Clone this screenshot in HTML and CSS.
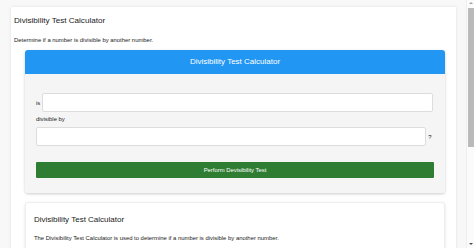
FILE: index.html
```html
<!DOCTYPE html>
<html lang="en">
  <head>
    <meta charset="UTF-8" />
    <meta name="viewport" content="width=device-width, initial-scale=1.0" />
    <title>Divisibility Test Calculator</title>
    <link rel="stylesheet" href="styles.css">
  </head>
  <body>
    <div class="page">
      <h1 class="page-title">Divisibility Test Calculator</h1>
      <p class="intro">Determine if a number is divisible by another number.</p>

      <!-- calculator -->
      <div class="calc">
        <div class="calc-head">Divisibility Test Calculator</div>
        <div class="calc-body">
          <div class="row">
            <label class="label-inline" for="num">is</label>
            <input class="field" id="num" type="text">
          </div>
          <label class="label-block" for="div">divisible by</label>
          <div class="row">
            <input class="field" id="div" type="text">
            <span class="qmark">?</span>
          </div>
          <button class="btn" type="button">Perform Devisibility Test</button>
        </div>
      </div>

      <!-- info -->
      <div class="info">
        <h2 class="info-title">Divisibility Test Calculator</h2>
        <p class="info-text">The Divisibility Test Calculator is used to determine if a number is divisible by another number.</p>
      </div>
    </div>

    <!-- window scrollbar -->
    <div class="scrollbar">
      <span class="arrow arrow-up"></span>
      <span class="thumb"></span>
      <span class="arrow arrow-down"></span>
    </div>
  </body>
</html>
```

FILE: styles.css
```css
* {
  margin: 0;
  padding: 0;
  box-sizing: border-box;
}

html,
body {
  height: 100%;
  overflow: hidden;
}

body {
  background: #f8f8f8;
  font-family: "Liberation Sans", Arial, sans-serif;
  color: #1a1a1a;
}

/* white page container */
.page {
  width: 445px;
  min-height: 260px;
  margin: 7px 0 0 11px;
  padding: 9px 3px 20px;
  background: #fff;
  box-shadow: 0 0 3px rgba(0, 0, 0, 0.1);
}

.page-title {
  font-size: 8.1px;
  line-height: 9px;
  font-weight: normal;
}

.intro {
  margin-top: 12px;
  font-size: 5.9px;
  line-height: 7px;
}

/* calculator card */
.calc {
  margin: 6px 8px 0 11px;
  border-radius: 3px;
  box-shadow: 0 1px 3px rgba(0, 0, 0, 0.2);
}

.calc-head {
  height: 24px;
  line-height: 24px;
  text-align: center;
  font-size: 8px;
  color: #fff;
  background: #2196f3;
  border-radius: 3px 3px 0 0;
}

.calc-body {
  padding: 19px 11px 15px;
  background: #f5f5f5;
  border-radius: 0 0 3px 3px;
  font-size: 5.9px;
}

.row {
  display: flex;
  align-items: center;
}

.label-inline {
  margin-right: 1.5px;
}

.label-block {
  display: block;
  margin: 3.5px 0 4.5px;
  line-height: 7px;
}

.field {
  flex: 1;
  height: 19px;
  background: #fff;
  border: 1px solid #ddd;
  border-radius: 2px;
}

.row:first-child .field {
  margin-right: 1px;
}

.qmark {
  margin-left: 2px;
  margin-right: 2.5px;
}

.btn {
  display: block;
  width: 100%;
  height: 16px;
  margin-top: 16px;
  border: none;
  border-radius: 1px;
  background: #2e7d32;
  color: #fff;
  font-family: inherit;
  font-size: 5.9px;
}

/* info card */
.info {
  margin: 9px 8px 0 11px;
  padding: 12px 8px 14px;
  background: #fff;
  border: 1px solid #eee;
  border-radius: 3px;
  box-shadow: 0 1px 3px rgba(0, 0, 0, 0.12);
}

.info-title {
  font-size: 8px;
  line-height: 9px;
  font-weight: normal;
}

.info-text {
  margin-top: 10.5px;
  font-size: 5.9px;
  line-height: 7px;
}

/* scrollbar drawn over the right edge */
.scrollbar {
  position: fixed;
  top: 0;
  right: 0;
  width: 8px;
  height: 100%;
  display: flex;
  flex-direction: column;
  align-items: flex-end;
  background: #fbfbfb;
  border-left: 1px solid #efefef;
}

.arrow {
  width: 0;
  height: 0;
  margin-right: 1px;
  border-left: 2px solid transparent;
  border-right: 2px solid transparent;
}

.arrow-up {
  margin-top: 2px;
  border-bottom: 2px solid #a3a3a3;
}

.arrow-down {
  margin-top: auto;
  margin-bottom: 3px;
  border-top: 2px solid #505050;
}

.thumb {
  width: 6px;
  height: 139px;
  margin-top: 4px;
  background: #bababa;
}
```
